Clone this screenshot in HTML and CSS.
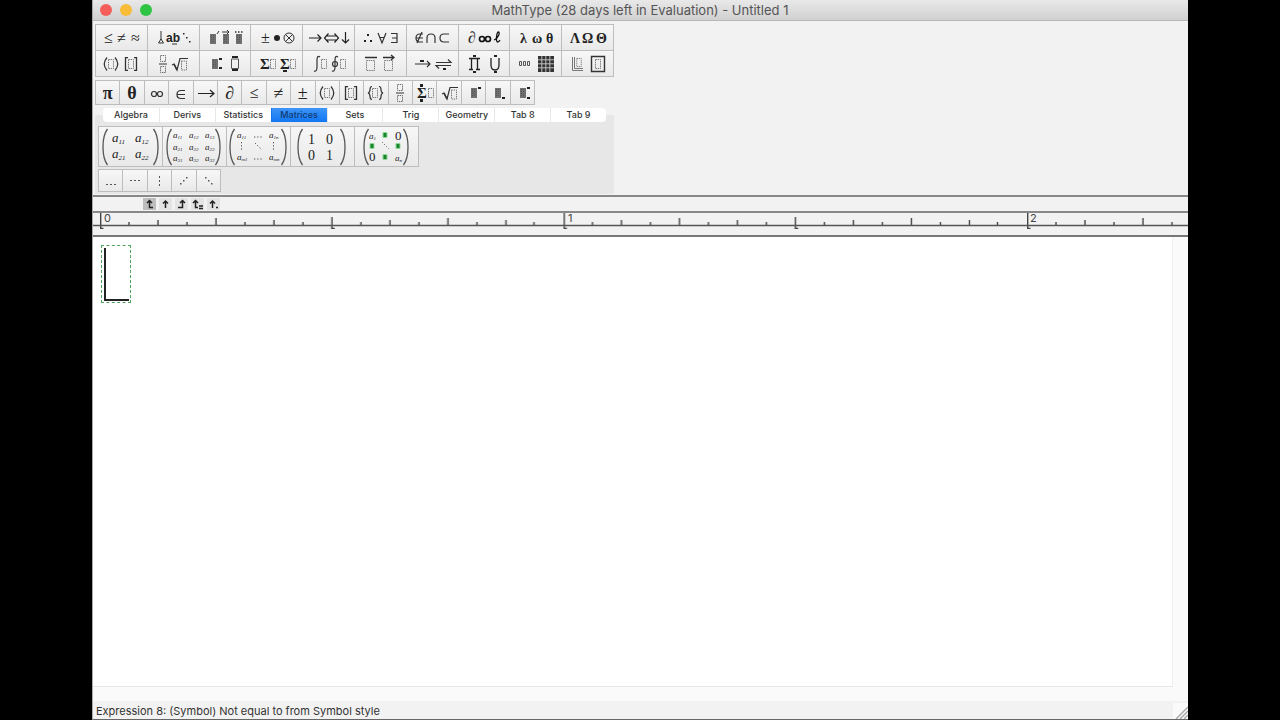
FILE: index.html
```html
<!DOCTYPE html>
<html lang="en">
<head>
<meta charset="utf-8">
<title>MathType (28 days left in Evaluation) - Untitled 1</title>
<link rel="stylesheet" href="styles.css">
</head>
<body>
<svg class="defs" width="0" height="0" aria-hidden="true">
  <defs>
    <symbol id="slot" viewBox="0 0 6 10" overflow="visible"><rect x=".5" y=".5" width="5" height="9" fill="none" stroke="#777" stroke-dasharray="1.4 .8"/></symbol>
    <symbol id="block" viewBox="0 0 6 10" overflow="visible"><rect width="6" height="10" fill="#707070"/><path d="M1 1.500h4M1 3.500h4M1 5.500h4M1 7.500h4" stroke="#555" stroke-dasharray="1 1"/></symbol>
    <symbol id="parens" viewBox="0 0 16 14" overflow="visible"><path d="M4 .5Q-1.500 7 4 13.500M12 .5Q17.500 7 12 13.500" fill="none" stroke="#333" stroke-width="1.200"/><use href="#slot" x="5" y="2" width="6" height="10"/></symbol>
    <symbol id="brackets" viewBox="0 0 14 14" overflow="visible"><path d="M4 .6H1.500V13.400H4M10 .6h2.500V13.400H10" fill="none" stroke="#333" stroke-width="1.300"/><use href="#slot" x="4" y="2" width="6" height="10"/></symbol>
    <symbol id="frac" viewBox="0 0 8 18" overflow="visible"><path d="M0 9h8" stroke="#333"/><path d="M1.500 .5h5v6h-5zM1.500 11.500h5v6h-5z" fill="none" stroke="#666" stroke-dasharray="1.400 .8"/></symbol>
    <symbol id="root" viewBox="0 0 16 14" overflow="visible"><path d="M0 8l2-1 3 6L8 1.500h8" fill="none" stroke="#333" stroke-width="1.200"/><path d="M2 7l3 6" stroke="#333" stroke-width="1.600"/><use href="#slot" x="9" y="3.500" width="6" height="10"/></symbol>
    <symbol id="bigparen" viewBox="0 0 6 36" overflow="visible"><path d="M5.500 0C-.5 8-.5 28 5.500 36" fill="none" stroke="#555" stroke-width="1.300"/></symbol>
    <pattern id="ticks" x="7" width="463.500" height="24" patternUnits="userSpaceOnUse">
      <path d="M29 9v3M87 9v3M145 9v3M203 9v3M261 9v3M319 9v3M377 9v3M434 9v3M58 7v5M174 7v5M290 7v5M406 7v5M116 5v7M348 5v7M.7 0v16M232 4v12" stroke="#444" stroke-width="1.400"/>
      <path d="M0 15.400h3.500M231.300 15.400h3.500" stroke="#444" stroke-width="1.300"/>
    </pattern>
  </defs>
</svg>
<div class="window">
  <header class="titlebar">
    <div class="lights">
      <button class="light close" aria-label="Close"></button>
      <button class="light minimize" aria-label="Minimize"></button>
      <button class="light zoom" aria-label="Zoom"></button>
    </div>
    <h1 class="title">MathType (28 days left in Evaluation) - Untitled 1</h1>
  </header>

  <section class="toolbars">
    <div class="cells palettes" role="toolbar" aria-label="Palettes">
      <button aria-label="Relations"><svg width="50" height="25"><text x="8" y="18">≤</text><text x="21" y="18">≠</text><text x="35" y="18">≈</text></svg></button>
      <button aria-label="Spaces"><svg width="50" height="25"><path d="M13 6v9M10.500 18l2.500-4 2.500 4z" fill="none" stroke="#333"/><text class="sans" x="18" y="17">ab</text><path d="M24 19h5" stroke="#333"/><path d="M35 8h1.500v1.500H35zM38 12h1.500v1.500H38zM41 16h1.500v1.500H41z"/></svg></button>
      <button aria-label="Embellishments"><svg width="50" height="25"><use href="#block" x="10" y="9" width="6" height="10"/><use href="#block" x="23" y="9" width="6" height="10"/><use href="#block" x="36" y="9" width="6" height="10"/><path d="M17 9l2-3M22 7h7M27 5l2 2-2 2" fill="none" stroke="#333"/><path d="M35 7h8" stroke="#333" stroke-width="1.500" stroke-dasharray="1.500 1.500"/></svg></button>
      <button aria-label="Operators"><svg width="50" height="25"><text x="9" y="18">±</text><circle cx="25" cy="13" r="3"/><g fill="none" stroke="#333"><circle cx="37" cy="13" r="5"/><path d="M33.500 9.500l7 7M40.500 9.500l-7 7"/></g></svg></button>
      <button aria-label="Arrows"><svg width="50" height="25"><g fill="none" stroke="#222" stroke-width="1.200"><path d="M5 13h12M13.500 9.500L17 13l-3.500 3.500M23 11h9M23 15h9M24.500 8.500L20.500 13l4 4.500M30.500 8.500l4 4.500-4 4.500M41.500 7v11M38 14.500l3.500 3.500 3.500-3.500"/></g></svg></button>
      <button aria-label="Logic"><svg width="50" height="25"><path d="M12 9h2v2h-2zM9 15h2v2H9zM15 15h2v2h-2z"/><g fill="none" stroke="#333" stroke-width="1.200"><path d="M23 8l4 10 4-10M24.500 12.500h5M36 8.500h6v9h-6M37 13h5"/></g></svg></button>
      <button aria-label="Sets"><svg width="50" height="25"><g fill="none" stroke="#333" stroke-width="1.200"><path d="M16 9h-3q-4 0-4 4t4 4h3M9 13h7M15 7l-5 11M20 18v-5q0-4 4-4t4 4v5M42 9h-5q-4 0-4 4t4 4h5"/></g></svg></button>
      <button aria-label="Miscellaneous"><svg width="50" height="25"><text class="bold" x="9" y="18">∂</text><g fill="none" stroke="#111" stroke-width="1.700"><circle cx="23" cy="14" r="2.500"/><circle cx="29" cy="14" r="2.500"/><path d="M35 15c5-2 6-8 4.500-8-2 0-3 10-1 10 1 0 2-1 2.500-2" stroke-width="1.300"/></g></svg></button>
      <button aria-label="Greek lowercase"><svg class="greek" width="50" height="25"><text x="9" y="18">λ</text><text x="21" y="18">ω</text><text x="35" y="18">θ</text></svg></button>
      <button aria-label="Greek uppercase"><svg class="greek" width="50" height="25"><text x="7" y="18">Λ</text><text x="19" y="18">Ω</text><text x="33" y="18">Θ</text></svg></button>

      <button aria-label="Fences"><svg width="50" height="25"><use href="#parens" x="7" y="6" width="16" height="14"/><use href="#brackets" x="28" y="6" width="14" height="14"/></svg></button>
      <button aria-label="Fractions and radicals"><svg width="50" height="25"><use href="#frac" x="11" y="4" width="8" height="18"/><use href="#root" x="24" y="6" width="16" height="14"/></svg></button>
      <button aria-label="Scripts"><svg width="50" height="25"><use href="#block" x="12" y="8" width="6" height="10"/><path d="M19 7h3v2h-3zM19 16h3v2h-3zM32 5h6v2h-6zM32 18h6v2h-6z"/><path d="M31.500 8v9.500h7V8z" fill="none" stroke="#555"/></svg></button>
      <button aria-label="Sums"><svg width="50" height="25"><text class="bold sigma" x="8" y="18">Σ</text><use href="#slot" x="18" y="8" width="6" height="10"/><text class="bold sigma" x="28" y="18">Σ</text><path d="M31 19h4v2h-4z"/><use href="#slot" x="38" y="8" width="6" height="10"/></svg></button>
      <button aria-label="Integrals"><svg width="50" height="25"><g fill="none" stroke="#333" stroke-width="1.200"><path d="M16 6q-3-2-3 3v7q0 5-3 4M34 6q-3-2-3 3v7q0 5-3 4"/><circle cx="31" cy="13" r="2.500"/></g><use href="#slot" x="17" y="8" width="6" height="10"/><use href="#slot" x="36" y="8" width="6" height="10"/></svg></button>
      <button aria-label="Bars"><svg width="50" height="25"><g fill="none" stroke="#333" stroke-width="1.300"><path d="M10 6.500h12M28 6.500h11M36 4l3 2.500L36 9"/></g><path d="M11.500 9.500h8v10h-8zM29.500 9.500h8v10h-8z" fill="none" stroke="#777" stroke-dasharray="1.400 .8"/></svg></button>
      <button aria-label="Labeled arrows"><svg width="50" height="25"><g fill="none" stroke="#333" stroke-width="1.200"><path d="M8 13h15M20 10l3 3-3 3M29 11.500h15l-3-3M44 14.500H29l3 3"/></g><path d="M13 9h4v2h-4zM36 17h3v2h-3z"/></svg></button>
      <button aria-label="Products"><svg width="50" height="25"><g fill="none" stroke="#222" stroke-width="1.300"><path d="M10 7.500h11M10 18.500h4M17 18.500h4M12.500 8v10M18.500 8v10M32 7v7q0 5 4 5t4-5V7"/></g><path d="M14 4h3v2h-3zM14 20h3v2h-3zM35 4h3v2h-3zM35 20h3v2h-3z"/></svg></button>
      <button aria-label="Matrices"><svg width="50" height="25"><path d="M8.500 10.500h2v4h-2zM12.500 10.500h2v4h-2zM16.500 10.500h2v4h-2z" fill="none" stroke="#555"/><path d="M27 5h16v16H27z" fill="#333"/><path d="M27 8.800h16M27 12.800h16M27 16.800h16M30.800 5v16M34.800 5v16M38.800 5v16" stroke="#ccc" stroke-width=".9"/></svg></button>
      <button aria-label="Boxes"><svg width="50" height="25"><g fill="none" stroke="#333"><path d="M9.500 6v13.500H20M11.500 6v11.500H20" stroke="#777"/><path d="M28.500 5.500h13v15h-13z" stroke-width="1.400"/></g><use href="#slot" x="13" y="7" width="6" height="9"/><use href="#slot" x="32" y="8" width="6" height="10"/></svg></button>
    </div>

    <div class="cells symbols" role="toolbar" aria-label="Small bar">
      <button class="strong">π</button>
      <button class="strong">θ</button>
      <button aria-label="Infinity"><svg width="23" height="23"><g fill="none" stroke="#333" stroke-width="1.200"><circle cx="9" cy="13" r="2.500"/><circle cx="15" cy="13" r="2.500"/></g></svg></button>
      <button aria-label="Element of"><svg width="23" height="23"><path d="M16 9.500h-4q-4 0-4 4t4 4h4M8 13.500h8" fill="none" stroke="#333" stroke-width="1.200"/></svg></button>
      <button aria-label="Right arrow"><svg width="23" height="23"><path d="M4 12.500h16M16 9l4 3.500-4 3.500" fill="none" stroke="#222" stroke-width="1.200"/></svg></button>
      <button class="strong">∂</button>
      <button>≤</button>
      <button class="large">≠</button>
      <button class="large">±</button>
      <button aria-label="Parentheses"><svg width="23" height="23"><use href="#parens" x="3" y="5" width="16" height="14"/></svg></button>
      <button aria-label="Brackets"><svg width="23" height="23"><use href="#brackets" x="4" y="5" width="14" height="14"/></svg></button>
      <button aria-label="Braces"><svg width="23" height="23"><path d="M8 5.500q-2 0-2 3t-2 3.500q2 .5 2 3.500t2 3M15 5.500q2 0 2 3t2 3.500q-2 .5-2 3.500t-2 3" fill="none" stroke="#333" stroke-width="1.200"/><use href="#slot" x="8" y="7" width="6" height="10"/></svg></button>
      <button aria-label="Fraction"><svg width="23" height="23"><use href="#frac" x="7" y="3" width="8" height="18"/></svg></button>
      <button aria-label="Summation"><svg width="23" height="23"><text class="bold sigma" x="4" y="17">Σ</text><path d="M7 3h3v3H7zM7 18h3v3H7z"/><use href="#slot" x="15" y="7" width="6" height="10"/></svg></button>
      <button aria-label="Square root"><svg width="23" height="23"><use href="#root" x="4" y="5" width="16" height="14"/></svg></button>
      <button aria-label="Superscript"><svg width="23" height="23"><use href="#block" x="9" y="7" width="6" height="10"/><path d="M16 6h3v2h-3z"/></svg></button>
      <button aria-label="Subscript"><svg width="23" height="23"><use href="#block" x="9" y="7" width="6" height="10"/><path d="M16 16h3v2h-3z"/></svg></button>
      <button aria-label="Subscript and superscript"><svg width="23" height="23"><use href="#block" x="9" y="7" width="6" height="10"/><path d="M16 6h3v2h-3zM16 16h3v2h-3z"/></svg></button>
    </div>

    <div class="tabbed">
      <div class="tabs" role="tablist">
        <button role="tab">Algebra</button>
        <button role="tab">Derivs</button>
        <button role="tab">Statistics</button>
        <button role="tab" aria-selected="true">Matrices</button>
        <button role="tab">Sets</button>
        <button role="tab">Trig</button>
        <button role="tab">Geometry</button>
        <button role="tab">Tab 8</button>
        <button role="tab">Tab 9</button>
      </div>
      <div class="panel" role="tabpanel">
        <div class="cells templates">
          <button aria-label="2 by 2 matrix"><svg width="63" height="39"><use href="#bigparen" x="3" y="2" width="6" height="36"/><use href="#bigparen" transform="translate(60 2) scale(-1 1)" width="6" height="36"/><g class="var"><text x="13" y="15">a<tspan class="sub" dy="2">11</tspan></text><text x="36" y="15">a<tspan class="sub" dy="2">12</tspan></text><text x="13" y="31">a<tspan class="sub" dy="2">21</tspan></text><text x="36" y="31">a<tspan class="sub" dy="2">22</tspan></text></g></svg></button>
          <button aria-label="3 by 3 matrix"><svg width="63" height="39"><use href="#bigparen" x="3" y="2" width="6" height="36"/><use href="#bigparen" transform="translate(58 2) scale(-1 1)" width="6" height="36"/><g class="var small"><text x="10" y="11">a<tspan class="tiny" dy="1">11</tspan></text><text x="26" y="11">a<tspan class="tiny" dy="1">12</tspan></text><text x="42" y="11">a<tspan class="tiny" dy="1">13</tspan></text><text x="10" y="23">a<tspan class="tiny" dy="1">21</tspan></text><text x="26" y="23">a<tspan class="tiny" dy="1">22</tspan></text><text x="42" y="23">a<tspan class="tiny" dy="1">23</tspan></text><text x="10" y="34">a<tspan class="tiny" dy="1">31</tspan></text><text x="26" y="34">a<tspan class="tiny" dy="1">32</tspan></text><text x="42" y="34">a<tspan class="tiny" dy="1">33</tspan></text></g></svg></button>
          <button aria-label="m by n matrix"><svg width="63" height="39"><use href="#bigparen" x="2" y="2" width="6" height="36"/><use href="#bigparen" transform="translate(60 2) scale(-1 1)" width="6" height="36"/><g class="var small"><text x="10" y="11">a<tspan class="tiny" dy="1">11</tspan></text><text x="42" y="11">a<tspan class="tiny" dy="1">1n</tspan></text><text x="10" y="33">a<tspan class="tiny" dy="1">m1</tspan></text><text x="42" y="33">a<tspan class="tiny" dy="1">mn</tspan></text></g><path d="M27 10h8M27 32h8M14.500 15v8M46.500 15v8M28 16l7 7" stroke="#555" stroke-dasharray="1.300 1.900"/></svg></button>
          <button aria-label="2 by 2 identity matrix"><svg width="63" height="39"><use href="#bigparen" x="6" y="2" width="6" height="36"/><use href="#bigparen" transform="translate(55 2) scale(-1 1)" width="6" height="36"/><g class="digit"><text x="17" y="17">1</text><text x="35" y="17">0</text><text x="17" y="33">0</text><text x="35" y="33">1</text></g></svg></button>
          <button aria-label="Diagonal matrix"><svg width="63" height="39"><use href="#bigparen" x="8" y="2" width="6" height="36"/><use href="#bigparen" transform="translate(54 2) scale(-1 1)" width="6" height="36"/><g class="var small"><text x="14" y="12">a<tspan class="tiny" dy="1">1</tspan></text><text x="40" y="34">a<tspan class="tiny" dy="1">n</tspan></text></g><g class="zero"><text x="40" y="13">0</text><text x="14" y="34">0</text></g><path d="M28 5.500h4v5h-4zM15 16.500h4v5h-4zM41 16.500h4v5h-4zM28 27.500h4v5h-4z" fill="#1b852b" stroke="#8fd899"/><path d="M27 15l7 7" stroke="#666" stroke-dasharray="1.200 1.800"/></svg></button>
        </div>
        <div class="cells dots">
          <button aria-label="Low dots"><svg width="23" height="21"><path d="M7 14h2v1H7zM11 14h2v1h-2zM15 14h2v1h-2z" fill="#555"/></svg></button>
          <button aria-label="Centered dots"><svg width="23" height="21"><path d="M6 10h2v1H6zM10 10h2v1h-2zM14 10h2v1h-2z" fill="#555"/></svg></button>
          <button aria-label="Vertical dots"><svg width="23" height="21"><path d="M11 6h1v2h-1zM11 10h1v2h-1zM11 14h1v2h-1z" fill="#555"/></svg></button>
          <button aria-label="Rising dots"><svg width="23" height="21"><path d="M8 13h1.500v1.500H8zM11 10h1.500v1.500H11zM14 7h1.500v1.500H14z" fill="#555"/></svg></button>
          <button aria-label="Falling dots"><svg width="23" height="21"><path d="M8 7h1.500v1.500H8zM11 10h1.500v1.500H11zM14 13h1.500v1.500H14z" fill="#555"/></svg></button>
        </div>
      </div>
    </div>
  </section>

  <section class="ruler">
    <div class="stops">
      <button class="on" aria-label="Left tab"><svg width="13" height="12"><path d="M6.500 3v6.500H10M4 5l2.500-2.500L9 5" /></svg></button>
      <button aria-label="Center tab"><svg width="13" height="12"><path d="M6.500 3v7M4 5.500L6.500 3 9 5.500"/></svg></button>
      <button aria-label="Right tab"><svg width="13" height="12"><path d="M7.500 3v6.500H3M5 5l2.500-2.500L10 5"/></svg></button>
      <button aria-label="Relational tab"><svg width="13" height="12"><path d="M4.500 3v6.500H7M2 5l2.500-2.500L7 5M8 8h4M8 10.500h4"/></svg></button>
      <button aria-label="Decimal tab"><svg width="13" height="12"><path d="M5.500 3v7M3 5.500L5.500 3 8 5.500M9 9.500h2"/></svg></button>
    </div>
    <svg class="scale" width="100%" height="22">
      <rect x="7" width="100%" height="17" fill="url(#ticks)"/>
      <path d="M0 12.500h1095" stroke="#555" stroke-width="1.500"/>
      <text x="11" y="9">0</text><text x="475" y="9">1</text><text x="937" y="9">2</text>
    </svg>
  </section>

  <main class="workspace">
    <div class="page" role="textbox" aria-label="Equation" tabindex="0">
      <div class="selection"><div class="caret"></div></div>
    </div>
  </main>

  <footer class="status">
    <span>Expression 8: (Symbol) Not equal to from Symbol style</span>
    <svg class="grip" width="15" height="16"><path d="M3 16L15 4M7 16l8-8M11 16l4-4" stroke="#aaa" stroke-width="1.500"/></svg>
  </footer>
</div>
</body>
</html>
```
FILE: styles.css
```css
* { box-sizing: border-box; }

body {
  margin: 0;
  background: #000;
  font-family: Inter, "Liberation Sans", sans-serif;
  color: #333;
}

button {
  margin: 0;
  padding: 0;
  border: 0;
  background: none;
  font: inherit;
  color: inherit;
}

svg { display: block; flex: none; }
.defs { position: absolute; }

.window {
  display: flex;
  flex-direction: column;
  height: 100vh;
  margin: 0 92px;
  background: #f2f2f2;
  border-left: 1px solid #aaa;
  border-bottom: 1px solid #666;
}

.titlebar {
  display: grid;
  grid-template-columns: 1fr auto 1fr;
  align-items: center;
  height: 21px;
  padding: 0 8px 0 7px;
  background: linear-gradient(#e9e9e9, #d0d0d0);
  border-bottom: 1px solid #b8b8b8;
}

.lights { display: flex; gap: 8px; }
.light { width: 12px; height: 12px; border-radius: 50%; }
.close { background: #f65e5a; }
.minimize { background: #f8bc38; }
.zoom { background: #2fc544; }

.title {
  margin: 0;
  font-size: 13px;
  line-height: 20px;
  font-weight: 400;
  color: #555;
  white-space: nowrap;
}

.toolbars {
  display: flex;
  flex-direction: column;
  align-items: flex-start;
  padding: 3px 2px 1px;
}

.cells {
  display: grid;
  gap: 1px;
  padding: 1px;
  background: #bdbdbd;
}

.cells button {
  display: flex;
  align-items: center;
  justify-content: center;
  background: linear-gradient(#f7f7f7, #e9e9e9);
  font: 16px/20px "Liberation Serif", serif;
  color: #222;
  overflow: hidden;
}

.cells svg { font: 16px "Liberation Serif", serif; fill: #222; }
.cells .bold, .cells .strong { font-weight: 700; }
.cells .strong, .cells .large { font-size: 18px; }
.cells .greek { font-size: 14px; font-weight: 700; }
.cells .sigma { font-size: 15px; }
.cells .sans { font: 700 12px "Liberation Sans", sans-serif; }

.palettes { width: 519px; grid-template-columns: repeat(10, 1fr); grid-auto-rows: 25px; }
.symbols { width: 440px; margin-top: 3px; grid-template-columns: repeat(18, 1fr); grid-auto-rows: 23px; }
.templates { width: 321px; grid-template-columns: repeat(5, 1fr); grid-auto-rows: 39px; }
.dots { width: 123px; grid-template-columns: repeat(5, 1fr); grid-auto-rows: 21px; }

.cells .var { font-style: italic; font-size: 13px; }
.cells .small { font-size: 9px; }
.cells .sub { font-size: 7px; }
.cells .tiny { font-size: 5px; }
.cells .digit { font-size: 14px; }
.cells .zero { font-size: 13px; }

.tabbed {
  width: 519px;
  margin-top: 3px;
  background: linear-gradient(#f2f2f2 7px, #e7e7e7 7px);
}

.tabs {
  display: grid;
  grid-template-columns: repeat(9, 1fr);
  margin: 0 8px;
  background: #fff;
  border-radius: 4px;
  overflow: hidden;
}

.tabs button {
  height: 14px;
  border-left: 1px solid #e6e6e6;
  font-size: 9px;
  line-height: 14px;
  font-weight: 500;
  text-align: center;
}
.tabs button:first-child { border-left: 0; }
.tabs [aria-selected="true"] {
  background: linear-gradient(#3d95f8, #1076f2);
  border-color: #1076f2;
  color: #123a72;
}

.panel {
  display: flex;
  flex-direction: column;
  align-items: flex-start;
  gap: 2px;
  padding: 4px 3px 2px;
}

.ruler { border-top: 2px solid #888; border-bottom: 2px solid #777; }
.stops {
  display: flex;
  gap: 3px;
  height: 16px;
  padding: 1px 50px;
  border-bottom: 2px solid #888;
}
.stops button { width: 13px; height: 12px; background: #e3e3e3; }
.stops .on { background: #bdbdbd; }
.stops path { fill: none; stroke: #222; stroke-width: 1.5px; }
.scale { height: 22px; overflow: visible; clip-path: inset(-4px 0 0 0); font: 11px Inter, sans-serif; fill: #444; }

.workspace {
  flex: 1;
  display: flex;
  padding: 0 15px 14px 0;
  background: #fafafa;
}
.page {
  flex: 1;
  padding: 8px;
  background: #fff;
  border-right: 1px solid #eee;
  border-bottom: 1px solid #e6e6e6;
}
.selection {
  width: 30px;
  height: 58px;
  padding: 2px;
  border: 1px dashed #4fa35a;
}
.caret {
  width: 25px;
  height: 53px;
  border-left: 2px solid #222;
  border-bottom: 2px solid #222;
}

.status {
  display: flex;
  justify-content: space-between;
  align-items: flex-end;
  height: 18px;
  padding-left: 3px;
  font-size: 11px;
  line-height: 16px;
}
.grip { background: #fafafa; }
```
